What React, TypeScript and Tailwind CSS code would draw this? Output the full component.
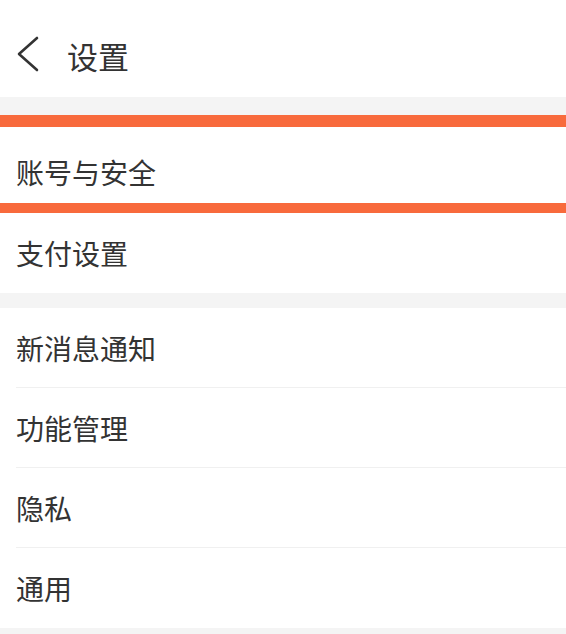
const font = { fontFamily: '"Noto Sans CJK SC", "Noto Sans", sans-serif' };

function Row({ label, divider = false }: { label: string; divider?: boolean }) {
  return (
    <div className="h-[80px] bg-white">
      <div className={`h-full flex items-center ml-4 ${divider ? 'border-b border-[#f0f0f0]' : ''}`}>
        <span className="text-[28px] leading-none text-[#333333]">{label}</span>
      </div>
    </div>
  );
}

export default function App() {
  return (
    <div className="w-[566px] h-[634px] bg-[#f4f4f4] overflow-hidden" style={font}>
      {/* Header */}
      <div className="h-[97px] bg-white flex items-center">
        <svg width="40" height="40" viewBox="0 0 40 40" className="ml-[8px] mt-[14px]">
          <polyline points="29,2 11,18 29,34" fill="none" stroke="#333333" strokeWidth="2.6" strokeLinecap="round" strokeLinejoin="round" />
        </svg>
        <span className="ml-[19px] mt-[14px] text-[31px] leading-none text-[#333333]">设置</span>
      </div>

      {/* Group 1 */}
      <div className="mt-[18px] h-[12px] bg-[#f86a3c]" />
      <div className="h-[76px] bg-white flex items-center pl-4">
        <span className="text-[28px] leading-none text-[#333333] mt-[14px]">账号与安全</span>
      </div>
      <div className="h-[10px] bg-[#f86a3c]" />
      <Row label="支付设置" />

      {/* Group 2 */}
      <div className="mt-[15px]">
        <Row label="新消息通知" divider />
        <Row label="功能管理" divider />
        <Row label="隐私" divider />
        <Row label="通用" />
      </div>
    </div>
  );
}
